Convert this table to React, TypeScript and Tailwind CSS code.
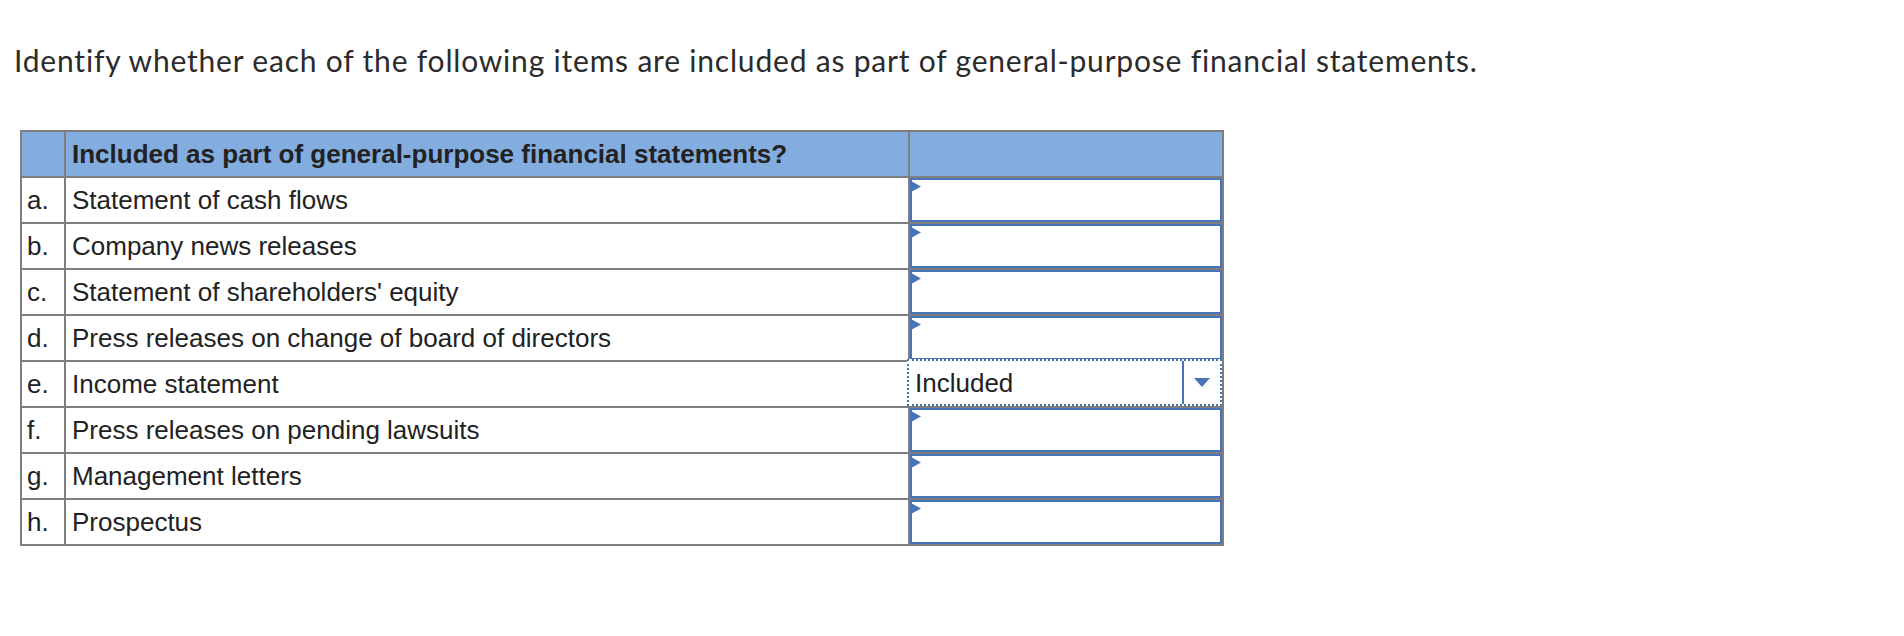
const ROWS = [
  { key: 'a.', item: 'Statement of cash flows', value: '' },
  { key: 'b.', item: 'Company news releases', value: '' },
  { key: 'c.', item: "Statement of shareholders' equity", value: '' },
  { key: 'd.', item: 'Press releases on change of board of directors', value: '' },
  { key: 'e.', item: 'Income statement', value: 'Included' },
  { key: 'f.', item: 'Press releases on pending lawsuits', value: '' },
  { key: 'g.', item: 'Management letters', value: '' },
  { key: 'h.', item: 'Prospectus', value: '' },
]

const BLUE = 'border-[#4773b7]'

function Marker() {
  return (
    <svg className="absolute left-[1px] top-[3px]" width="10" height="12" viewBox="0 0 10 12">
      <polygon points="0,0 10,5.5 0,11" fill="#4773b7" />
    </svg>
  )
}

function EmptySelect() {
  return (
    <div className="relative h-full bg-white">
      <div className={`h-full border-2 ${BLUE}`} />
      <Marker />
    </div>
  )
}

function OpenSelect({ value }: { value: string }) {
  return (
    <div className="relative h-full bg-white">
      <div className={`relative z-10 -ml-[3px] -mt-[3px] flex h-[47px] border-2 border-dotted ${BLUE} bg-white`}>
        <div className="flex flex-1 items-center pl-[6px] pt-[1px]">{value}</div>
        <div className={`flex w-[38px] items-center justify-center border-l-2 ${BLUE}`}>
          <svg width="16" height="9" viewBox="0 0 16 9">
            <polygon points="0,0 16,0 8,9" fill="#4773b7" />
          </svg>
        </div>
      </div>
    </div>
  )
}

export default function App() {
  return (
    <div className="h-[636px] w-[1904px] bg-white">
      <p className="pl-[14px] pt-[42px] font-['Lato',sans-serif] text-[30px] leading-[36px] tracking-[0.8px] text-[#2b2b2b]">
        Identify whether each of the following items are included as part of general-purpose financial statements.
      </p>

      <div className="ml-[20px] mt-[52px] grid w-fit grid-cols-[42px_842px_312px] gap-[2px] bg-[#7f7f7f] p-[2px] font-['Liberation_Sans',Arial,sans-serif] text-[26px] text-[#222]">
        <div className="h-[44px] bg-[#83acdf]" />
        <div className="flex h-[44px] items-center bg-[#83acdf] px-[6px] font-bold">
          Included as part of general-purpose financial statements?
        </div>
        <div className="h-[44px] bg-[#83acdf]" />

        {ROWS.map((r) => (
          <div key={r.key} className="contents">
            <div className="flex h-[44px] items-center bg-white px-[5px]">{r.key}</div>
            <div className="flex h-[44px] items-center bg-white px-[6px]">{r.item}</div>
            <div className="h-[44px]">
              {r.value ? <OpenSelect value={r.value} /> : <EmptySelect />}
            </div>
          </div>
        ))}
      </div>
    </div>
  )
}
